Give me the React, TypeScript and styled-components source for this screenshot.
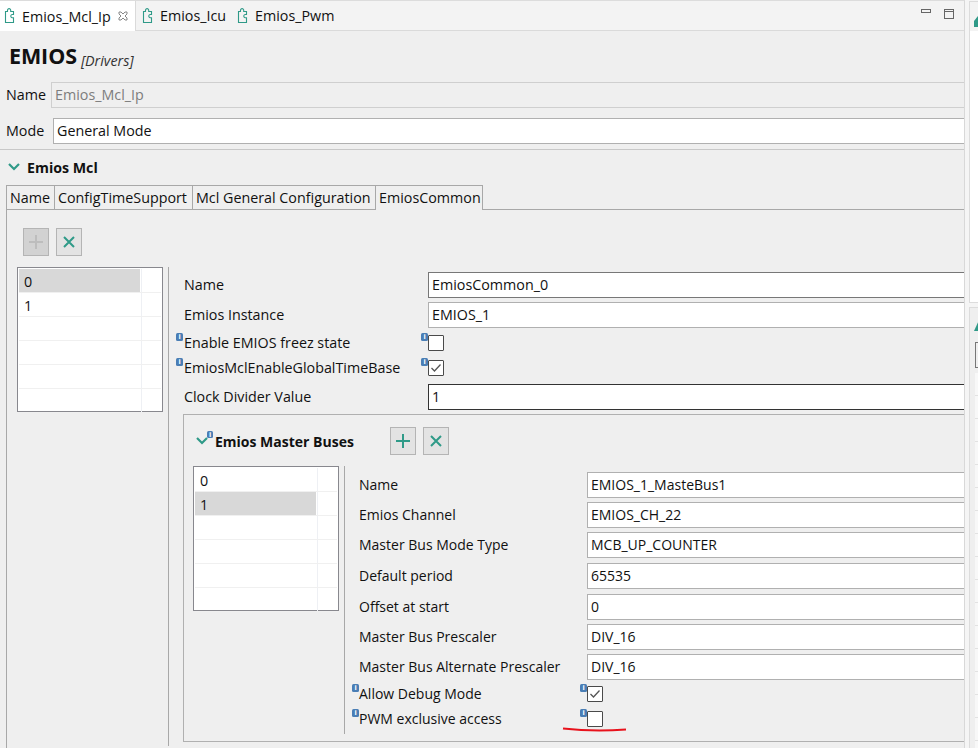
import React from "react";
import styled, { createGlobalStyle } from "styled-components";

const Global = createGlobalStyle`
  html, body { margin: 0; padding: 0; background: #fff; }
  body { font-family: "Open Sans", "Noto Sans", sans-serif; font-size: 14.3px; color: #111; overflow: hidden; }
`;
const Page = styled.div`display: flex; width: 978px; height: 748px; overflow: hidden; background: #f5f5f5;`;
const Editor = styled.div`
  width: 965px; height: 748px; flex: none; box-sizing: border-box; overflow: hidden;
  border-top: 1px solid #dcdcdc; border-right: 1px solid #d8d8d8; background: #efefef;
`;
const TabBar = styled.div`display: flex; height: 29px; background: #f3f3f3; border-bottom: 1px solid #dadada; align-items: stretch; position: relative;`;
const FileTab = styled.div<{ $active?: boolean; $w: number }>`
  width: ${(p) => p.$w}px; box-sizing: border-box; display: flex; align-items: center; gap: 4px; padding-left: 4px;
  background: ${(p) => (p.$active ? "#fff" : "transparent")};
  ${(p) => (p.$active ? "height: 30px; border-right: 1px solid #dadada; margin-right: 2px;" : "")}
`;
const CloseSlot = styled.span`margin-left: 3px; display: flex;`;
const WinButtons = styled.div`margin-left: auto; margin-right: 10px; display: flex; gap: 13px; padding-top: 8px;`;
const Content = styled.div`height: 720px; box-sizing: border-box; padding: 10px 0 0 0;`;
const TitleRow = styled.div`display: flex; align-items: flex-start; gap: 4px; padding-left: 9px; height: 29px;`;
const Title = styled.span`font-size: 21.5px; font-weight: 700; letter-spacing: -0.1px; line-height: 29px;`;
const Subtitle = styled.span`font-size: 14.3px; font-style: italic; color: #333; line-height: 20px; margin-top: 10px;`;
const TopField = styled.div<{ $top: number; $left: number }>`
  display: flex; align-items: center; margin-top: ${(p) => p.$top}px; padding-left: 6px; height: 26px;
  & > label { width: ${(p) => p.$left - 6}px; flex: none; }
`;
const Text = styled.label`white-space: nowrap; padding-bottom: 2px;`;
const Input = styled.div<{ $disabled?: boolean; $line?: string }>`
  flex: 1; height: 26px; box-sizing: border-box; min-width: 0; padding: 0 3px; line-height: 23px;
  background: ${(p) => (p.$disabled ? "#efefef" : "#fff")};
  color: ${(p) => (p.$disabled ? "#7d7d7d" : "#111")};
  border: 1px solid ${(p) => p.$line ?? "#b0b0b0"};
  border-right: none;
`;
const Rule = styled.div`height: 0; border-top: 1px solid #c8c8c8; margin: 5px 0 0 0;`;
const SectionHead = styled.div`display: flex; align-items: center; gap: 7px; padding: 0 0 2px 8px; height: 20px; box-sizing: border-box; margin-top: 8px; font-weight: 700; font-size: 14.2px;`;
const Tabs = styled.div`display: flex; margin: 7px 0 0 6px; height: 25px; border-bottom: 1px solid #a8a8a8; box-sizing: border-box;`;
const Tab = styled.div<{ $w: number; $active?: boolean }>`
  width: ${(p) => p.$w}px; flex: none; box-sizing: border-box; padding-left: 3px; line-height: 23px;
  border: 1px solid #a8a8a8; border-bottom: none; margin-right: -1px; white-space: nowrap;
  ${(p) => (p.$active ? "background:#efefef; height:25px;" : "")}
`;
const TabBody = styled.div`margin-left: 6px; border-left: 1px solid #a8a8a8; padding: 18px 0 0 10px; height: 540px; box-sizing: border-box;`;
const Toolbar = styled.div<{ $left: number }>`display: flex; gap: 7px; padding-left: ${(p) => p.$left}px;`;
const IconButton = styled.div<{ $disabled?: boolean }>`
  width: 26px; height: 28px; box-sizing: border-box; display: flex; align-items: center; justify-content: center;
  border: 1px solid #b4b4b4; background: ${(p) => (p.$disabled ? "#d2d2d2" : "#e3e3e3")};
`;
const Split = styled.div`display: flex; align-items: flex-start; margin-top: 11px;`;
const ListBox = styled.div`width: 146px; height: 145px; flex: none; box-sizing: border-box; background: #fff; border: 1px solid #88888e; padding: 1px;`;
const ListRow = styled.div<{ $selected?: boolean }>`
  display: flex; height: 24px; box-sizing: border-box; border-bottom: 1px solid #f0f0f0; line-height: 25px;
  & > span:first-child { width: 121px; padding-left: 5px; box-sizing: border-box; background: ${(p) => (p.$selected ? "#d8d8d8" : "transparent")}; }
  & > span:last-child { flex: 1; border-left: 1px solid #eef0f4; margin-left: 1px; }
`;
const Divider = styled.div<{ $h: number; $after: number }>`width: 0; height: ${(p) => p.$h}px; border-left: 1px solid #a8a8a8; margin: 0 ${(p) => p.$after}px 0 5px; flex: none;`;
const Form = styled.div`flex: 1; min-width: 0;`;
const NestedForm = styled(Form)`font-size: 14px;`;
const Row = styled.div<{ $h?: number; $mt?: number; $label: number }>`
  position: relative; display: flex; align-items: center; height: ${(p) => p.$h ?? 26}px; margin-top: ${(p) => p.$mt ?? 4}px;
  & > label { width: ${(p) => p.$label}px; flex: none; }
`;
const Info = styled.i<{ $left: number; $top?: number; $small?: boolean }>`
  position: absolute; left: ${(p) => p.$left}px; top: ${(p) => p.$top ?? 0}px;
  width: ${(p) => (p.$small ? 6 : 7)}px; height: ${(p) => (p.$small ? 7 : 8)}px; border-radius: 1.5px; background: #4a7eb5;
  color: #fff; font: 700 8px/8px "Liberation Sans", sans-serif; text-align: center; font-style: normal;
`;
const Check = styled.div`
  width: 16px; height: 16px; box-sizing: border-box; background: #fff; border: 1px solid #4a4a4a; border-radius: 1px; display: flex; align-items: center; justify-content: center;
`;
const Group = styled.div`
  margin: 4px 0 0 -1px; height: 328px; box-sizing: border-box; border: 1px solid #b0b0b0; border-right: none; padding: 12px 0 0 9px; position: relative;
`;
const GroupHead = styled.div`display: flex; align-items: center; height: 28px; position: relative; padding-left: 3px;`;
const GroupTitle = styled.span`font-weight: 700; font-size: 14px; margin-left: 7px; width: 175px;`;
const Red = styled.svg`position: absolute; left: 378px; top: 312px;`;
const Side = styled.div`flex: 1; display: flex; flex-direction: column; padding: 1px 0 0 4px; min-width: 0; height: 748px; box-sizing: border-box;`;
const SideTop = styled.div`height: 302px; flex: none; box-sizing: border-box; background: #fff; border: 1px solid #dcdcdc; border-right: none;`;
const SideHead = styled.div`height: 29px; background: #f3f3f3; padding: 10px 0 0 4px; box-sizing: border-box;`;
const SideBottom = styled.div`margin-top: 4px; flex: 1; background: #efefef; border-left: 1px solid #dcdcdc; border-top: 1px solid #dcdcdc; padding: 12px 0 0 4px;`;
const SideGlyph = styled.svg`display: block;`;
const SideBox = styled.div`width: 20px; height: 26px; margin: 11px 0 0 1px; box-sizing: border-box; border: 1px solid #777; border-right: none;`;
const SideRows = styled.div`
  margin: 5px 0 0 1px; height: 375px;
  background: repeating-linear-gradient(to bottom, #f8f8f8 0 22px, #e2e2e2 22px 23px);
`;

const Puzzle = () => (
  <svg width="14" height="16" viewBox="0 0 14 16" fill="none" stroke="#2f9a88" strokeWidth="1.1">
    <path d="M1.5 3.5h2V2.2a1.6 1.6 0 0 1 3.2 0v1.3h2.8v3h-1.3a1.5 1.5 0 0 0-1.4 1.6 1.5 1.5 0 0 0 1.4 1.6h1.3v4.8h-8z" />
  </svg>
);
const Chevron = () => (
  <svg width="12" height="8" viewBox="0 0 12 8" fill="none" stroke="#2f9a88" strokeWidth="2.2"><path d="M1 1l5 5 5-5" /></svg>
);
const Plus = ({ c }: { c: string }) => (
  <svg width="16" height="16" viewBox="0 0 16 16" stroke={c} strokeWidth="2"><path d="M8 1v14M1 8h14" /></svg>
);
const Cross = () => (
  <svg width="12" height="12" viewBox="0 0 12 12" stroke="#2f9a88" strokeWidth="2"><path d="M1 1l10 10M11 1L1 11" /></svg>
);
const Tick = () => (
  <svg width="12" height="10" viewBox="0 0 12 10" fill="none" stroke="#555" strokeWidth="1.3"><path d="M1.5 5l3 3L10.5 1.5" /></svg>
);
const Close = () => (
  <svg width="10" height="10" viewBox="0 0 10 10" fill="none" stroke="#888" strokeWidth="1"><path d="M1 1h2l2 2 2-2h2v2L7 5l2 2v2H7L5 7 3 9H1V7l2-2-2-2z" /></svg>
);

const List = ({ selected }: { selected: number }) => (
  <ListBox>
    {[0, 1, 2, 3, 4, 5].map((i) => (
      <ListRow key={i} $selected={i === selected}>
        <span>{i < 2 ? i : ""}</span>
        <span />
      </ListRow>
    ))}
  </ListBox>
);

export default function App() {
  return (
    <Page>
      <Global />
      <Editor>
        <TabBar>
          <FileTab $active $w={136}><Puzzle />Emios_Mcl_Ip<CloseSlot><Close /></CloseSlot></FileTab>
          <FileTab $w={95}><Puzzle />Emios_Icu</FileTab>
          <FileTab $w={110}><Puzzle />Emios_Pwm</FileTab>
          <WinButtons>
            <svg width="10" height="5" fill="none" stroke="#666"><rect x=".5" y=".5" width="9" height="3" /></svg>
            <svg width="10" height="10" fill="none" stroke="#666"><rect x=".5" y=".5" width="9" height="9" /><path d="M0 2.5h10" /></svg>
          </WinButtons>
        </TabBar>
        <Content>
          <TitleRow><Title>EMIOS</Title><Subtitle>[Drivers]</Subtitle></TitleRow>
          <TopField $top={12} $left={51}><Text>Name</Text><Input $disabled $line="#cfcfcf">Emios_Mcl_Ip</Input></TopField>
          <TopField $top={10} $left={53}><Text>Mode</Text><Input>General Mode</Input></TopField>
          <Rule />
          <SectionHead><Chevron />Emios Mcl</SectionHead>
          <Tabs>
            <Tab $w={49}>Name</Tab>
            <Tab $w={139}>ConfigTimeSupport</Tab>
            <Tab $w={184}>Mcl General Configuration</Tab>
            <Tab $w={108} $active>EmiosCommon</Tab>
          </Tabs>
          <TabBody>
            <Toolbar $left={6}>
              <IconButton $disabled><Plus c="#bdbdbd" /></IconButton>
              <IconButton><Cross /></IconButton>
            </Toolbar>
            <Split>
              <List selected={0} />
              <Divider $h={479} $after={15} />
              <Form>
                <Row $label={244} $mt={5}><Text>Name</Text><Input $line="#777">EmiosCommon_0</Input></Row>
                <Row $label={244}><Text>Emios Instance</Text><Input>EMIOS_1</Input></Row>
                <Row $label={244} $h={20} $mt={5}><Info $left={-8}>i</Info><Text>Enable EMIOS freez state</Text><Info $left={237}>i</Info><Check /></Row>
                <Row $label={244} $h={20} $mt={5}><Info $left={-8}>i</Info><Text>EmiosMclEnableGlobalTimeBase</Text><Info $left={237}>i</Info><Check><Tick /></Check></Row>
                <Row $label={244} $mt={6}><Text>Clock Divider Value</Text><Input $line="#333">1</Input></Row>
                <Group>
                  <GroupHead>
                    <Chevron />
                    <Info $left={14} $top={4} $small>i</Info>
                    <GroupTitle>Emios Master Buses</GroupTitle>
                    <Toolbar $left={0}>
                      <IconButton><Plus c="#2f9a88" /></IconButton>
                      <IconButton><Cross /></IconButton>
                    </Toolbar>
                  </GroupHead>
                  <Split>
                    <List selected={1} />
                    <Divider $h={268} $after={14} />
                    <NestedForm>
                      <Row $label={228} $mt={6}><Text>Name</Text><Input>EMIOS_1_MasteBus1</Input></Row>
                      <Row $label={228}><Text>Emios Channel</Text><Input>EMIOS_CH_22</Input></Row>
                      <Row $label={228}><Text>Master Bus Mode Type</Text><Input>MCB_UP_COUNTER</Input></Row>
                      <Row $label={228} $mt={5}><Text>Default period</Text><Input>65535</Input></Row>
                      <Row $label={228} $mt={5}><Text>Offset at start</Text><Input>0</Input></Row>
                      <Row $label={228}><Text>Master Bus Prescaler</Text><Input>DIV_16</Input></Row>
                      <Row $label={228}><Text>Master Bus Alternate Prescaler</Text><Input>DIV_16</Input></Row>
                      <Row $label={228} $h={20} $mt={4}><Info $left={-7}>i</Info><Text>Allow Debug Mode</Text><Info $left={221}>i</Info><Check><Tick /></Check></Row>
                      <Row $label={228} $h={20} $mt={5}><Info $left={-7}>i</Info><Text>PWM exclusive access</Text><Info $left={221}>i</Info><Check /></Row>
                    </NestedForm>
                  </Split>
                  <Red width="66" height="5" viewBox="0 0 66 5" fill="none" stroke="#e8121c" strokeWidth="2"><path d="M1 1.5c18 2 44 2.4 63 1" /></Red>
                </Group>
              </Form>
            </Split>
          </TabBody>
        </Content>
      </Editor>
      <Side>
        <SideTop><SideHead><svg width="8" height="11"><path d="M0 11V5l4-5 4 5v6z" fill="#2f9a88" /></svg></SideHead></SideTop>
        <SideBottom>
          <SideGlyph width="8" height="11"><path d="M0 11L5 0l3 0v11z" fill="#2f9a88" /></SideGlyph>
          <SideBox />
          <SideRows />
        </SideBottom>
      </Side>
    </Page>
  );
}
